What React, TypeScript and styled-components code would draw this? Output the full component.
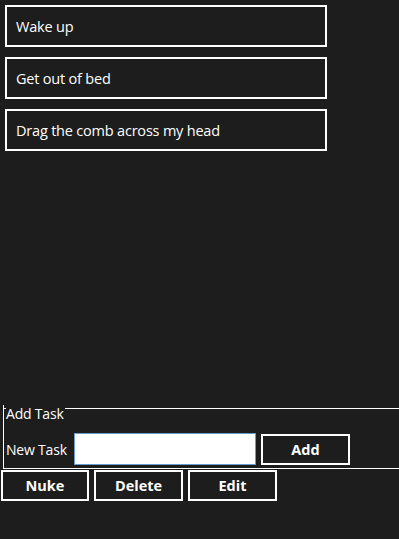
import React from 'react';
import styled, { createGlobalStyle } from 'styled-components';

const GlobalStyle = createGlobalStyle`
  html, body {
    margin: 0;
    padding: 0;
    background: #1d1d1d;
  }
  body {
    font-family: 'Open Sans', 'Noto Sans', sans-serif;
    color: #fff;
  }
`;

const Page = styled.div`
  width: 399px;
  height: 539px;
  display: flex;
  flex-direction: column;
  background: #1d1d1d;
  overflow: hidden;
`;

const TaskList = styled.div`
  flex: 1;
  display: flex;
  flex-direction: column;
  gap: 10px;
  padding: 5px 0 0 5px;
`;

const TaskItem = styled.div`
  box-sizing: border-box;
  width: 322px;
  height: 42px;
  border: 2px solid #fff;
  display: flex;
  align-items: center;
  padding-left: 9px;
  font-size: 14.5px;
  letter-spacing: -0.2px;
`;

const GroupBox = styled.div`
  margin-left: 3px;
  border-left: 1px solid #fff;
  border-bottom: 1px solid #fff;
  display: flex;
  flex-direction: column;
`;

const GroupHeader = styled.div`
  display: flex;
  align-items: flex-start;
  height: 18px;
`;

const HeaderTick = styled.span`
  width: 2px;
  margin-top: 3px;
  border-top: 1px solid #fff;
`;

const HeaderLine = styled.span`
  flex: 1;
  margin-top: 3px;
  border-top: 1px solid #fff;
`;

const GroupTitle = styled.span`
  font-size: 14px;
  line-height: 18px;
  letter-spacing: -0.2px;
  padding-right: 1px;
`;

const InputRow = styled.div`
  display: flex;
  align-items: center;
  padding: 10px 0 3px 2px;
`;

const FieldLabel = styled.label`
  font-size: 14px;
  letter-spacing: -0.2px;
  width: 68px;
`;

const TaskInput = styled.input`
  box-sizing: border-box;
  width: 182px;
  height: 32px;
  border: 1px solid #6a9bcb;
  background: #fff;
  outline: none;
  margin: 0 5px 0 0;
  padding: 0 6px;
  font-family: inherit;
`;

const ActionButton = styled.button<{ $width?: number }>`
  box-sizing: border-box;
  width: ${p => p.$width ?? 88}px;
  height: 31px;
  border: 2px solid #fff;
  background: #1d1d1d;
  color: #fff;
  font-family: 'Open Sans', 'Noto Sans', sans-serif;
  font-weight: 700;
  font-size: 14.5px;
  padding: 0;
  margin: 0;
`;

const ButtonRow = styled.div`
  display: flex;
  gap: 5px;
  padding: 1px 0 38px 1px;
`;

export default function App() {
  const tasks = ['Wake up', 'Get out of bed', 'Drag the comb across my head'];
  return (
    <Page>
      <GlobalStyle />
      <TaskList>
        {tasks.map(t => (
          <TaskItem key={t}>{t}</TaskItem>
        ))}
      </TaskList>
      <GroupBox>
        <GroupHeader>
          <HeaderTick />
          <GroupTitle>Add Task</GroupTitle>
          <HeaderLine />
        </GroupHeader>
        <InputRow>
          <FieldLabel>New Task</FieldLabel>
          <TaskInput />
          <ActionButton $width={89}>Add</ActionButton>
        </InputRow>
      </GroupBox>
      <ButtonRow>
        <ActionButton>Nuke</ActionButton>
        <ActionButton $width={89}>Delete</ActionButton>
        <ActionButton $width={89}>Edit</ActionButton>
      </ButtonRow>
    </Page>
  );
}
